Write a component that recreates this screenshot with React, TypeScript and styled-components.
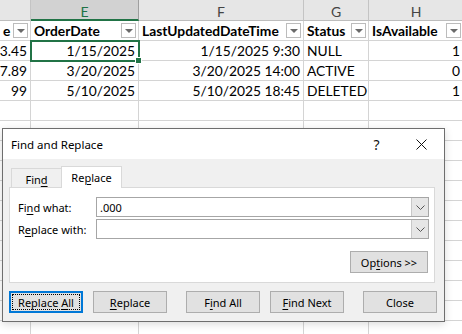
import React from 'react';
import styled, { createGlobalStyle, css } from 'styled-components';

const GlobalStyle = createGlobalStyle`
    html, body {
        margin: 0;
        padding: 0;
        background: #fff;
    }
    body {
        width: 462px;
        height: 334px;
        overflow: hidden;
        position: relative;
    }
`;

const cellFont = `'Lato', 'Liberation Sans', sans-serif`;
const uiFont = `'Noto Sans', 'Open Sans', sans-serif`;
const gridLine = '#d4d4d4';
const excelGreen = '#217346';

const Sheet = styled.div`
    display: grid;
    grid-template-columns: 31px 108px 165px 65px 95px;
    grid-template-rows: 21px;
    grid-auto-rows: 20px;
    width: 464px;
    font-family: ${cellFont};
    font-size: 13.8px;
    color: #000;
`;

interface ColHeadProps {
    active?: boolean;
}

const ColHead = styled.div<ColHeadProps>`
    display: flex;
    align-items: center;
    justify-content: center;
    padding-top: 3px;
    background: ${props => props.active ? '#d2d2d2' : '#e6e6e6'};
    color: ${props => props.active ? excelGreen : '#444'};
    border-right: 1px solid ${props => props.active ? '#9f9f9f' : '#c4c4c4'};
    border-bottom: ${props => props.active ? `2px solid ${excelGreen}` : '1px solid #bdbdbd'};
    font-family: ${cellFont};
    font-size: 14px;
    box-sizing: border-box;
`;

interface CellProps {
    align?: 'left' | 'right';
    bold?: boolean;
    selected?: boolean;
}

const Cell = styled.div<CellProps>`
    position: relative;
    display: flex;
    align-items: center;
    justify-content: ${props => props.align === 'right' ? 'flex-end' : 'flex-start'};
    padding: 0 3px;
    border-right: 1px solid ${gridLine};
    border-bottom: 1px solid ${gridLine};
    box-sizing: border-box;
    white-space: nowrap;
    overflow: hidden;
    font-weight: ${props => props.bold ? 700 : 400};
    ${props => props.selected && css`
        overflow: visible;
        outline: 2px solid ${excelGreen};
        outline-offset: -1px;
        z-index: 1;
        &::after {
            content: '';
            position: absolute;
            right: -4px;
            bottom: -4px;
            width: 5px;
            height: 5px;
            background: ${excelGreen};
            border: 1px solid #fff;
        }
    `}
`;

const HeadCell = styled(Cell)`
    justify-content: space-between;
    gap: 3px;
    padding: 0 2px 0 3px;
`;

const FilterButton = styled.span`
    flex: none;
    width: 13px;
    height: 13px;
    border: 1px solid #bcbcbc;
    background: #fff;
    display: flex;
    align-items: center;
    justify-content: center;
    &::before {
        content: '';
        border-left: 4px solid transparent;
        border-right: 4px solid transparent;
        border-top: 4px solid #6a6a6a;
    }
`;

/* ---------- dialog ---------- */

const Dialog = styled.div`
    position: absolute;
    left: 2px;
    top: 128px;
    width: 443px;
    height: 194px;
    box-sizing: border-box;
    border: 1px solid #6e6e6e;
    background: #f0f0f0;
    font-family: ${uiFont};
    font-size: 11px;
    color: #000;
    display: flex;
    flex-direction: column;
    box-shadow: 0 2px 8px rgba(0, 0, 0, 0.15);
    z-index: 5;
`;

const TitleBar = styled.div`
    height: 30px;
    background: #fff;
    display: flex;
    align-items: center;
    padding: 0 0 0 8px;
    font-size: 11.5px;
`;

const Title = styled.div`
    flex: 1;
    padding-top: 1px;
`;

const TitleButton = styled.div`
    width: 45px;
    height: 30px;
    display: flex;
    align-items: center;
    justify-content: center;
    color: #111;
`;

const HelpMark = styled.span`
    font-size: 14px;
`;

const Body = styled.div`
    flex: 1;
    display: flex;
    flex-direction: column;
    padding: 7px 9px 0 6px;
`;

const Tabs = styled.div`
    display: flex;
    align-items: flex-end;
    height: 21px;
    padding-left: 2px;
`;

interface TabProps {
    selected?: boolean;
}

const Tab = styled.div<TabProps>`
    box-sizing: border-box;
    display: flex;
    align-items: center;
    justify-content: center;
    border: 1px solid #d9d9d9;
    border-bottom: none;
    ${props => props.selected ? css`
        width: 61px;
        height: 22px;
        background: #fff;
        margin-bottom: -1px;
        position: relative;
        z-index: 1;
    ` : css`
        width: 50px;
        height: 19px;
        background: #f0f0f0;
        border-right: none;
        padding-top: 2px;
    `}
`;

const Panel = styled.div`
    box-sizing: border-box;
    width: 426px;
    height: 96px;
    background: #fff;
    border: 1px solid #d9d9d9;
    padding: 9px 5px 0 8px;
    display: flex;
    flex-direction: column;
`;

const FieldRow = styled.div`
    display: flex;
    align-items: center;
    height: 20px;
    margin-bottom: 2px;
`;

const FieldLabel = styled.label`
    width: 78px;
    flex: none;
`;

const Combo = styled.div`
    box-sizing: border-box;
    flex: 1;
    height: 20px;
    border: 1px solid #a6a6a6;
    background: #fff;
    display: flex;
    align-items: center;
`;

const ComboText = styled.div`
    flex: 1;
    padding-left: 3px;
`;

const ComboButton = styled.div`
    box-sizing: border-box;
    width: 17px;
    height: 18px;
    background: #e6e6e6;
    border-left: 1px solid #c8c8c8;
    display: flex;
    align-items: center;
    justify-content: center;
`;

const OptionsRow = styled.div`
    display: flex;
    justify-content: flex-end;
    margin-top: 10px;
    padding-right: 1px;
`;

const ButtonRow = styled.div`
    display: flex;
    margin-top: 8px;
    margin-right: -2px;
`;

interface ButtonProps {
    focused?: boolean;
    gapBefore?: number;
}

const Button = styled.div<ButtonProps>`
    box-sizing: border-box;
    width: 75px;
    height: 22px;
    margin-left: ${props => props.gapBefore ?? 0}px;
    background: #e1e1e1;
    border: 1px solid #adadad;
    display: flex;
    align-items: center;
    justify-content: center;
    position: relative;
    white-space: pre;
    ${props => props.focused && css`
        border: 2px solid #0078d7;
        &::after {
            content: '';
            position: absolute;
            inset: 1px;
            border: 1px dotted #000;
        }
    `}
`;

const OptionsButton = styled(Button)`
    width: 78px;
`;

const Key = styled.span`
    text-decoration: underline;
    text-underline-offset: 2px;
`;

const Chevron = () => (
    <svg width="9" height="5" viewBox="0 0 9 5">
        <path d="M0.5 0.5 L4.5 4.5 L8.5 0.5" fill="none" stroke="#555" strokeWidth="1" />
    </svg>
);

const CloseIcon = () => (
    <svg width="11" height="11" viewBox="0 0 11 11">
        <path d="M0.5 0.5 L10.5 10.5 M10.5 0.5 L0.5 10.5" stroke="#111" strokeWidth="1" />
    </svg>
);

const rows = [
    ['23.45', '1/15/2025', '1/15/2025 9:30', 'NULL', '1'],
    ['67.89', '3/20/2025', '3/20/2025 14:00', 'ACTIVE', '0'],
    ['99', '5/10/2025', '5/10/2025 18:45', 'DELETED', '1'],
];

const headers = ['e', 'OrderDate', 'LastUpdatedDateTime', 'Status', 'IsAvailable'];
const letters = ['', 'E', 'F', 'G', 'H'];

export default function App() {
    const emptyRows = Array.from({ length: 12 });
    return (
        <>
            <GlobalStyle />
            <Sheet>
                {letters.map((l, i) => (
                    <ColHead key={'c' + i} active={l === 'E'}>{l}</ColHead>
                ))}
                {headers.map((h, i) => (
                    <HeadCell key={'h' + i} bold>
                        <span>{h}</span>
                        <FilterButton />
                    </HeadCell>
                ))}
                {rows.map((r, ri) => (
                    <React.Fragment key={'r' + ri}>
                        <Cell align="right">{r[0]}</Cell>
                        <Cell align="right" selected={ri === 0}>{r[1]}</Cell>
                        <Cell align="right">{r[2]}</Cell>
                        <Cell>{r[3]}</Cell>
                        <Cell align="right">{r[4]}</Cell>
                    </React.Fragment>
                ))}
                {emptyRows.map((_, ri) => (
                    <React.Fragment key={'e' + ri}>
                        <Cell /><Cell /><Cell /><Cell /><Cell />
                    </React.Fragment>
                ))}
            </Sheet>

            <Dialog>
                <TitleBar>
                    <Title>Find and Replace</Title>
                    <TitleButton><HelpMark>?</HelpMark></TitleButton>
                    <TitleButton><CloseIcon /></TitleButton>
                </TitleBar>
                <Body>
                    <Tabs>
                        <Tab><span>Fin<Key>d</Key></span></Tab>
                        <Tab selected><span>Re<Key>p</Key>lace</span></Tab>
                    </Tabs>
                    <Panel>
                        <FieldRow>
                            <FieldLabel>Fi<Key>n</Key>d what:</FieldLabel>
                            <Combo>
                                <ComboText>.000</ComboText>
                                <ComboButton><Chevron /></ComboButton>
                            </Combo>
                        </FieldRow>
                        <FieldRow>
                            <FieldLabel>R<Key>e</Key>place with:</FieldLabel>
                            <Combo>
                                <ComboText />
                                <ComboButton><Chevron /></ComboButton>
                            </Combo>
                        </FieldRow>
                        <OptionsRow>
                            <OptionsButton><span>Op<Key>t</Key>ions &gt;&gt;</span></OptionsButton>
                        </OptionsRow>
                    </Panel>
                    <ButtonRow>
                        <Button focused><span>Replace <Key>A</Key>ll</span></Button>
                        <Button gapBefore={10}><span><Key>R</Key>eplace</span></Button>
                        <Button gapBefore={19}><span>F<Key>i</Key>nd All</span></Button>
                        <Button gapBefore={10}><span><Key>F</Key>ind Next</span></Button>
                        <Button gapBefore={19}><span>Close</span></Button>
                    </ButtonRow>
                </Body>
            </Dialog>
        </>
    );
}
